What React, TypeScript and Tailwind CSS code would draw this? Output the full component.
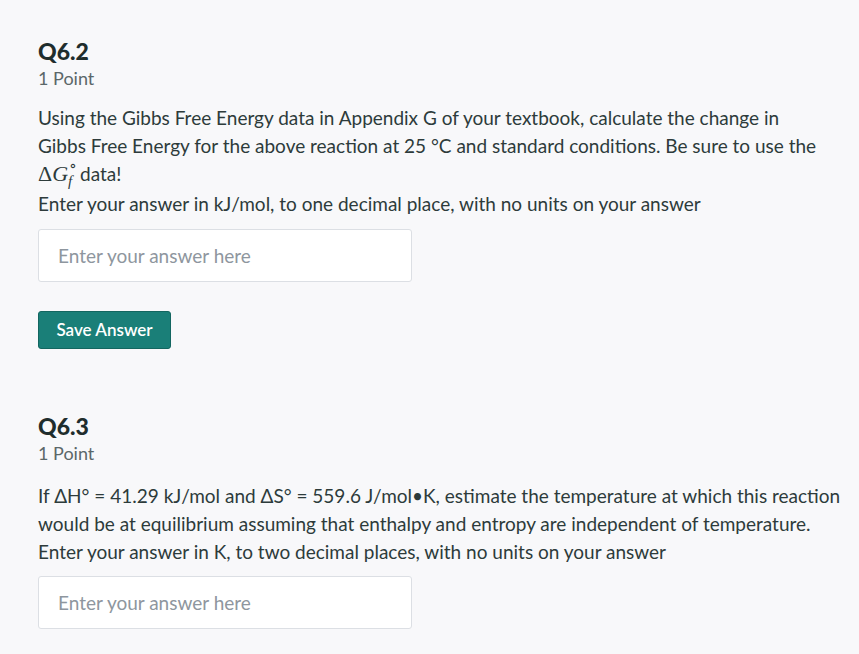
import React from "react";

function AnswerBox() {
  return (
    <input
      type="text"
      placeholder="Enter your answer here"
      className="w-[374px] h-[53px] px-[19px] bg-white border border-[#dcdfe4] rounded-[3px] text-[19px] text-[#2d3b3b] placeholder:text-[#8e969e] outline-none"
    />
  );
}

function Question({ num, children }: { num: string; children: React.ReactNode }) {
  return (
    <div className="flex flex-col">
      <h2 className="text-[23px] font-black text-[#1f2d2d] leading-[28px]">{num}</h2>
      <div className="text-[18px] text-[#5b6769] leading-[24px] mt-[1px]">1 Point</div>
      {children}
    </div>
  );
}

export default function App() {
  return (
    <div
      className="min-h-[654px] bg-[#f8f8fa] pl-[38px] pt-[37px] text-[#2d3b3b]"
      style={{ fontFamily: "Lato, 'Open Sans', sans-serif" }}
    >
      <Question num="Q6.2">
        <div className="mt-[14px] text-[19px] leading-[28px] w-[790px]">
          <p>
            Using the Gibbs Free Energy data in Appendix G of your textbook, calculate the change in Gibbs Free Energy for
            the above reaction at 25 °C and standard conditions. Be sure to use the
          </p>
          <p>
            {/* ΔG_f° in math type */}
            <span style={{ fontFamily: "'Liberation Serif', 'DejaVu Serif', serif" }} className="text-[22px]">
              Δ<i>G</i>
              <span className="relative inline-block w-0 top-[-10px] left-[1px] text-[16px]">∘</span>
              <i className="relative top-[5px] text-[15px] pr-[3px]">f</i>
            </span>{" "}
            data!
          </p>
          <p>Enter your answer in kJ/mol, to one decimal place, with no units on your answer</p>
        </div>
        <div className="mt-[11px]">
          <AnswerBox />
        </div>
        <div className="mt-[29px]">
          <button className="w-[133px] h-[38px] bg-[#1a7f78] border border-[#136660] rounded-[3px] text-white text-[17px] font-semibold">
            Save Answer
          </button>
        </div>
      </Question>

      <div className="mt-[63px]">
        <Question num="Q6.3">
          <div className="mt-[17px] text-[19px] leading-[28px] w-[815px]">
            <p>
              If ΔH° = 41.29 kJ/mol and ΔS° = 559.6 J/mol•K, estimate the temperature at which this reaction would be at
              equilibrium assuming that enthalpy and entropy are independent of temperature.
            </p>
            <p>Enter your answer in K, to two decimal places, with no units on your answer</p>
          </div>
          <div className="mt-[10px]">
            <AnswerBox />
          </div>
        </Question>
      </div>
    </div>
  );
}
